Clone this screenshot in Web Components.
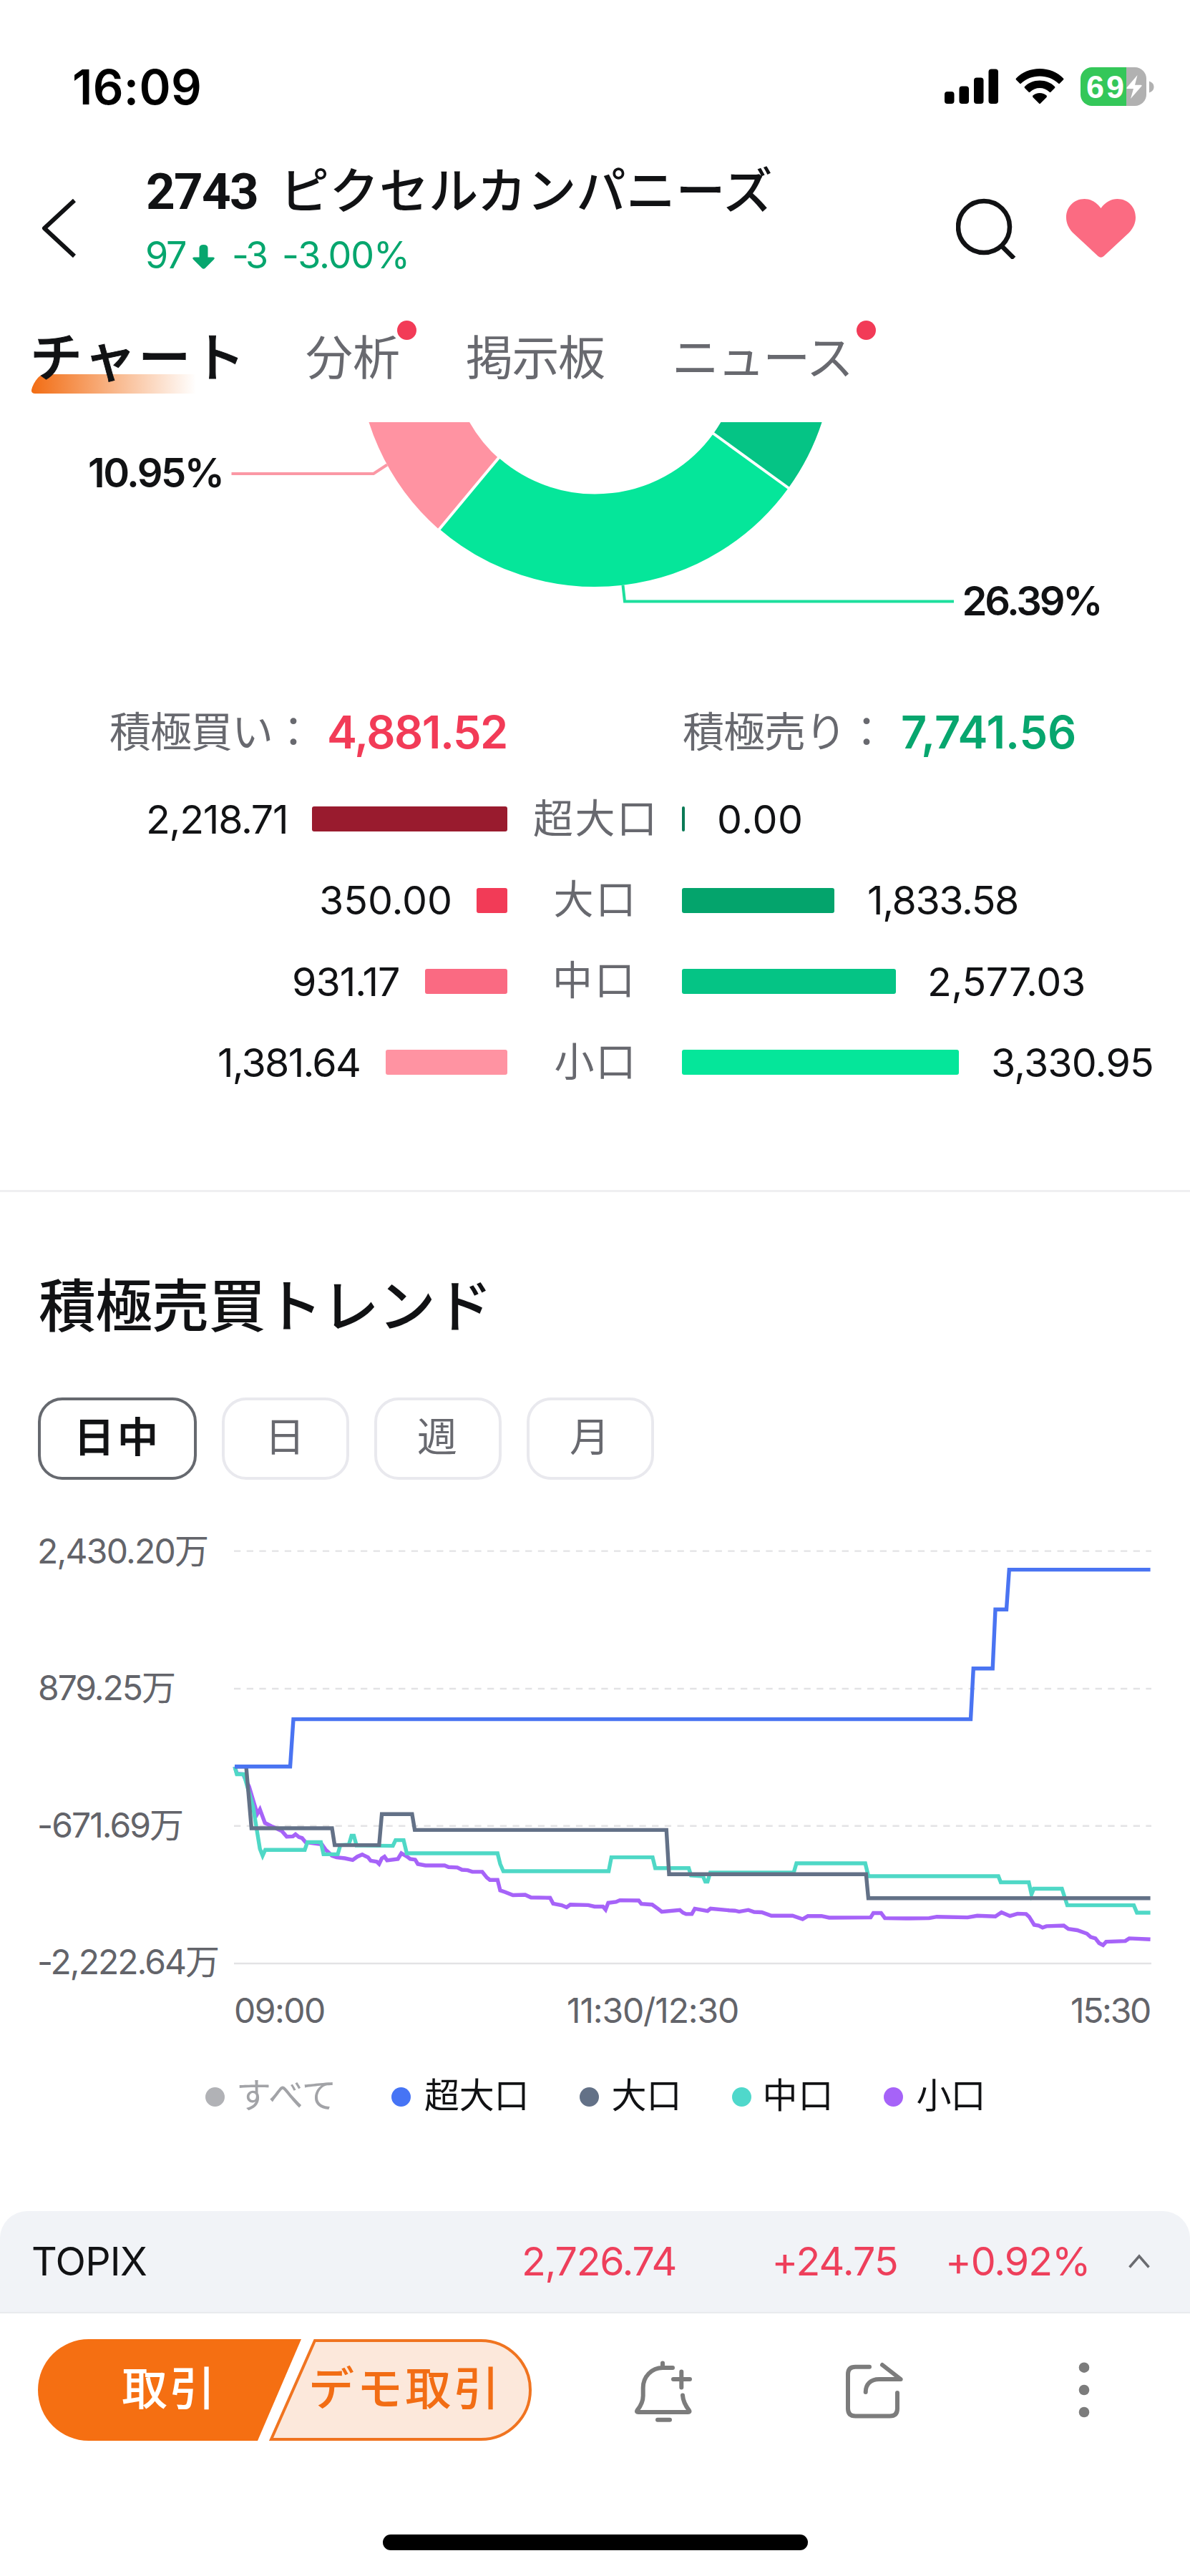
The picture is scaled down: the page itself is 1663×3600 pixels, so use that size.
<!DOCTYPE html>
<html lang="ja">
<head>
<meta charset="utf-8">
<title>2743 ピクセルカンパニーズ</title>
<style>
  body {
    margin: 0;
    background: #fff;
    color: #111214;
    font-family: Inter, "Noto Sans CJK JP", sans-serif;
    line-height: 1;
  }
</style>
</head>
<body>
<stock-page></stock-page>

<script>
function define(name, html, setup) {
  const template = document.createElement("template");
  template.innerHTML = html;
  customElements.define(name, class extends HTMLElement {
    constructor() {
      super();
      this.attachShadow({ mode: "open" })
        .appendChild(template.content.cloneNode(true));
    }
    connectedCallback() {
      if (setup) setup(this, this.shadowRoot);
    }
  });
}

// Text whose box is exactly its ink, tracked to the width in "w"
const pen = document.createElement("canvas").getContext("2d");

define("fit-text", `
  <style>
    :host { display: block; flex: none; white-space: nowrap; }
    span { display: inline-block; }
  </style>
  <span><slot></slot></span>
`, (host, root) => {
  const width = parseFloat(host.getAttribute("w"));
  const text = host.textContent.trim();
  const cs = getComputedStyle(host);
  pen.font = `${cs.fontWeight} ${cs.fontSize} ${cs.fontFamily}`;
  const m = pen.measureText(text);
  const ink = m.actualBoundingBoxLeft + m.actualBoundingBoxRight;
  const span = root.querySelector("span");
  span.style.letterSpacing = (width - ink) / ([...text].length - 1 || 1) + "px";
  span.style.marginLeft = m.actualBoundingBoxLeft + "px";
  host.style.width = width + "px";
});

define("status-bar", `
  <style>
    :host {
      display: flex;
      align-items: center;
      box-sizing: border-box;
      height: 190px;
      padding: 52px 50px 0 104px;
      color: #000;
    }
    .time { font-size: 67px; font-weight: 600; margin-right: auto; }
    .wifi { margin: 0 23px 0 24px; }
    .battery { position: relative; width: 103px; height: 54px; }
    .battery svg { display: block; }
    .level {
      position: absolute;
      left: 9px; top: 5px;
      color: #fff;
      font: 700 45px/1 "Liberation Sans", sans-serif;
    }
  </style>
  <fit-text class="time" w="175">16:09</fit-text>
  <svg width="75" height="50" viewBox="0 0 75 50">
    <rect x="0" y="32" width="13.5" height="17" rx="4"/>
    <rect x="20.5" y="24.500" width="13.5" height="24.500" rx="4"/>
    <rect x="41" y="12.500" width="13.5" height="36.500" rx="4"/>
    <rect x="61.500" y="0.500" width="13.5" height="48.500" rx="4"/>
  </svg>
  <svg class="wifi" width="68" height="50" viewBox="0 0 68 50">
    <path d="M34 0C47 0 59 5 67 13.500q1 1 0 2l-5 5q-1 1-2 0C53 14 44 10.500 34 10.500S15 14 8 20.500q-1 1-2 0l-5-5q-1-1 0-2C9 5 21 0 34 0Z"/>
    <path d="M34 16.500c8.500 0 15.500 3 21 8.500q1 1 0 2l-5.500 5.500q-1 1-2 0C44 29 39 27 34 27s-10 2-13.500 5.500q-1 1-2 0L13 27q-1-1 0-2c5.500-5.500 12.500-8.500 21-8.500Z"/>
    <path d="M34 34c4 0 7 1.500 9.500 3.500q1 1 0 2.500l-8.500 8.500q-1 1-2 0L24.500 40q-1-1.500 0-2.500C27 35.500 30 34 34 34Z"/>
  </svg>
  <div class="battery">
    <svg width="103" height="54" viewBox="0 0 103 54">
      <path d="M64 0h12a16 16 0 0 1 16 16v22a16 16 0 0 1-16 16H64Z" fill="#b1b1b1"/>
      <path d="M64 0H16A16 16 0 0 0 0 16v22a16 16 0 0 0 16 16h48Z" fill="#34c759"/>
      <path d="M96 19.500c4.500 1.500 6.500 4.500 6.500 8s-2 6.500-6.500 8Z" fill="#b1b1b1"/>
      <path d="M79.500 11 64.500 28.500q-.8 1.500 1 1.500h8.500L70 44l15.500-17.800q.8-1.500-1-1.500h-8.500Z" fill="#fff"/>
    </svg>
    <fit-text class="level" w="51">69</fit-text>
  </div>
`);

define("quote-header", `
  <style>
    :host {
      display: flex;
      align-items: center;
      box-sizing: border-box;
      height: 240px;
      padding: 18px 76px 0 58px;
    }
    .info { margin: 0 auto 14px 100px; }
    .row { display: flex; align-items: center; height: 88px; }
    .code { font: 700 71px/1 Roboto, sans-serif; margin-right: 44px; }
    .name { font-size: 69px; font-weight: 500; }
    .quote { color: #07a66e; font-size: 52px; padding-top: 1px; }
    .quote svg { margin: 5px 27px 0 10px; }
    .change { margin-right: 24px; }
    .heart { margin-left: 70px; }
  </style>
  <svg width="48" height="82" viewBox="0 0 48 82" fill="none" stroke="#111214" stroke-width="6" stroke-linejoin="round">
    <path d="M46 2 4 41l42 39"/>
  </svg>
  <div class="info">
    <div class="row">
      <fit-text class="code" w="153">2743</fit-text>
      <fit-text class="name" w="680">ピクセルカンパニーズ</fit-text>
    </div>
    <div class="row quote">
      <fit-text w="53">97</fit-text>
      <svg width="31" height="34" viewBox="0 0 31 34" fill="#07a66e">
        <path d="M15.500 0q6 0 6 5v12.500H29q3 .5 1 3L17.500 33q-2 1.500-4 0L1 20.500q-2-2.500 1-3h7.500V5q0-5 6-5Z"/>
      </svg>
      <fit-text class="change" w="46">-3</fit-text>
      <fit-text w="171">-3.00%</fit-text>
    </div>
  </div>
  <svg width="84" height="86" viewBox="0 0 84 86" fill="none" stroke="#111214" stroke-width="6.500">
    <circle cx="39" cy="41" r="36"/>
    <path d="m64 68 17 17"/>
  </svg>
  <svg class="heart" width="97" height="82" viewBox="0 0 97 82">
    <path d="M48.500 13C55 4 63 0 71.500 0 86 0 97 11 97 26c0 8-3.500 15-9 21L52.500 80q-4 3.500-8 0L9 47C3.500 41 0 34 0 26 0 11 11 0 25.500 0 34 0 42 4 48.500 13Z" fill="#fb6b82"/>
  </svg>
`);

define("tab-item", `
  <style>
    :host {
      display: block;
      position: relative;
      isolation: isolate;
      color: #68696f;
      font-size: 66px;
    }
    :host([active]) {
      color: #111214;
      font-size: 73px;
      font-weight: 500;
      -webkit-text-stroke: 1px #111214;
    }
    svg, i { display: none; position: absolute; }
    :host([active]) svg { display: block; left: -4px; top: 60px; z-index: -1; }
    :host([dot]) i {
      display: block;
      left: calc(100% + var(--dot-shift, 0px));
      top: -19px;
      width: 27px;
      height: 27px;
      border-radius: 50%;
      background: #f23b57;
    }
  </style>
  <svg width="230" height="27" viewBox="0 0 230 27">
    <defs>
      <linearGradient id="fade">
        <stop offset="0" stop-color="#f26d14"/>
        <stop offset="1" stop-color="#f26d14" stop-opacity="0"/>
      </linearGradient>
    </defs>
    <path d="M230 0H22Q13 0 9 5 2 13 0 22q-.5 5 5 5h225Z" fill="url(#fade)"/>
  </svg>
  <slot></slot>
  <i></i>
`);

define("tab-strip", `
  <style>
    :host {
      display: flex;
      align-items: center;
      box-sizing: border-box;
      height: 160px;
      padding: 0 0 21px 48px;
      gap: 95px;
    }
    tab-item:last-child { margin-left: 5px; }
  </style>
  <tab-item active><fit-text w="285">チャート</fit-text></tab-item>
  <tab-item dot style="--dot-shift:-2px"><fit-text w="129">分析</fit-text></tab-item>
  <tab-item><fit-text w="193">掲示板</fit-text></tab-item>
  <tab-item dot style="--dot-shift:7px"><fit-text w="245">ニュース</fit-text></tab-item>
`);

define("donut-chart", `
  <style>
    :host { display: block; height: 350px; }
    svg { display: block; overflow: hidden; }
    text { font-size: 56px; font-weight: 600; fill: #111214; }
  </style>
  <svg width="1663" height="350" viewBox="0 590 1663 350">
    <g fill="none" stroke-width="129.500">
      <path d="M564.500 486.500A267 269 0 0 0 656 691" stroke="#ff93a2"/>
      <path d="M656.200 690.200A268.800 268.800 0 0 0 1049.500 643.800" stroke="#05e69a"/>
      <path d="M1049.500 643.800A268.800 268.800 0 0 0 1100.300 486.500" stroke="#05c485"/>
    </g>
    <g stroke="#fff" stroke-width="4">
      <path d="M700 636 611 743"/>
      <path d="m993 603 113 82"/>
    </g>
    <path d="M323.500 662H522l19-12.500" fill="none" stroke="#fb98a5" stroke-width="4"/>
    <path d="m870.500 818 2.500 22.500h460" fill="none" stroke="#1ddf9d" stroke-width="4"/>
    <text x="123" y="680.500" textLength="191">10.95%</text>
    <text x="1344.500" y="859.500" textLength="197">26.39%</text>
  </svg>
`);

define("flow-row", `
  <style>
    :host {
      display: grid;
      grid-template-columns: 709px 244px 1fr;
      align-items: center;
      height: 113.400px;
      font-size: 55.500px;
    }
    div { display: flex; align-items: center; }
    .buy { justify-content: flex-end; gap: 37px; }
    .mid {
      justify-content: center;
      padding: 0 4px 2px 0;
      color: #68696f;
      font-size: 56px;
    }
    .sell { gap: 48px; }
    i { height: 35px; border-radius: 3px; }
  </style>
  <div class="buy"><slot name="buy"></slot><i></i></div>
  <div class="mid"><slot></slot></div>
  <div class="sell"><i></i><slot name="sell"></slot></div>
`, (host, root) => {
  const bars = root.querySelectorAll("i");
  ["buy", "sell"].forEach((side, n) => {
    const [width, color] = host.getAttribute(side).split(" ");
    bars[n].style.width = width + "px";
    bars[n].style.background = color;
  });
});

define("order-flow", `
  <style>
    :host { display: block; height: 722.500px; border-bottom: 3px solid #efeff1; }
    .totals {
      display: grid;
      grid-template-columns: 801px 1fr;
      align-items: center;
      box-sizing: border-box;
      height: 148px;
      padding: 18px 0 0 154px;
    }
    .total { display: flex; align-items: center; gap: 45px; }
    .label { color: #68696f; font-size: 58px; }
    .sum { font-size: 63px; font-weight: 600; }
  </style>
  <div class="totals">
    <div class="total">
      <fit-text class="label" w="261">積極買い：</fit-text>
      <fit-text class="sum" w="247" style="color:#f23b57">4,881.52</fit-text>
    </div>
    <div class="total">
      <fit-text class="label" w="261">積極売り：</fit-text>
      <fit-text class="sum" w="241" style="color:#07a66e">7,741.56</fit-text>
    </div>
  </div>
  <flow-row buy="273 #991b2e" sell="4 #0b7a56">
    <fit-text slot="buy" w="191">2,218.71</fit-text>
    <fit-text w="166">超大口</fit-text>
    <fit-text slot="sell" w="114">0.00</fit-text>
  </flow-row>
  <flow-row buy="43 #f23b57" sell="213 #04a46c">
    <fit-text slot="buy" w="180">350.00</fit-text>
    <fit-text w="107">大口</fit-text>
    <fit-text slot="sell" w="208">1,833.58</fit-text>
  </flow-row>
  <flow-row buy="115 #fa6a82" sell="299 #05c485">
    <fit-text slot="buy" w="146">931.17</fit-text>
    <fit-text w="104">中口</fit-text>
    <fit-text slot="sell" w="214">2,577.03</fit-text>
  </flow-row>
  <flow-row buy="170 #ff93a2" sell="387 #05e69a">
    <fit-text slot="buy" w="196">1,381.64</fit-text>
    <fit-text w="107">小口</fit-text>
    <fit-text slot="sell" w="222">3,330.95</fit-text>
  </flow-row>
`);

define("period-chip", `
  <style>
    :host {
      display: flex;
      align-items: center;
      justify-content: center;
      box-sizing: border-box;
      width: 178px;
      height: 115px;
      padding: 0 2px 5px 0;
      border: 4px solid #e9e9ee;
      border-radius: 34px;
      color: #68696f;
      font-size: 56px;
    }
    :host([active]) {
      width: 222px;
      padding-right: 0;
      border-color: #66696f;
      color: #111214;
      font-size: 57px;
      font-weight: 500;
      -webkit-text-stroke: 1px #111214;
    }
  </style>
  <slot></slot>
`);

define("trend-chart", `
  <style>
    :host { display: block; color: #63646a; font-size: 48px; }
    .plot { display: flex; height: 624px; padding-left: 55px; }
    .scale {
      display: flex;
      flex-direction: column;
      justify-content: space-between;
      width: 272px;
      height: 622px;
    }
    svg { margin-top: 11.400px; overflow: visible; }
    .axis { display: flex; padding: 18px 0 0 329px; }
  </style>
  <div class="plot">
    <div class="scale">
      <fit-text w="235">2,430.20万</fit-text>
      <fit-text w="189">879.25万</fit-text>
      <fit-text w="200">-671.69万</fit-text>
      <fit-text w="250">-2,222.64万</fit-text>
    </div>
    <svg width="1282" height="600" viewBox="0 0 1282 600" fill="none">
      <g stroke="#e3e3e5" stroke-width="2.400">
        <path d="M0 12.600h1282M0 205h1282M0 396.700h1282" stroke-dasharray="9.300 8.400"/>
        <path d="M0 589h1282"/>
      </g>
      <g class="lines" stroke-width="5.400"></g>
    </svg>
  </div>
  <div class="axis">
    <fit-text w="124">09:00</fit-text>
    <fit-text w="237" style="margin-left:341px">11:30/12:30</fit-text>
    <fit-text w="109" style="margin-left:467px">15:30</fit-text>
  </div>
`, (host, root) => {
  // last one is drawn on top
  const series = {
    "#a663f8": "1,314 4,323.6 12.6,324.5 21,341.5 32.5,380 36.2,373.6 43.2,392.5 52.3,397.2 58.7,400 66.7,403.8 73.7,411.8 82.3,411.4 86,408.5 90.8,412.3 95.1,413.7 100,419.4 123,422.7 128.3,430.2 136.9,438.3 143.3,440.6 155.1,442 165.8,444.4 172.3,439.7 179.2,436.8 187.3,440.6 191,445.3 199.6,446.8 202.8,450 206.6,442 210.3,439.7 214,444.9 229,443 233.9,435 241.9,439.7 246.2,443 253.2,443.9 256.9,450 267.6,452 294.4,452 299.8,454.3 312.1,454.8 318.5,458 326.6,458.6 333,460.9 346.9,460.9 353.3,468.9 357.6,472.2 368.3,472.2 372,486.9 379,489.2 389.8,493.5 406.9,493 415,496.8 441.7,497.2 446,505.3 457.8,507.6 464.8,510.5 470,506.7 495,507.4 503.8,509.5 515.6,509.5 519.3,513.8 523,504.3 533.9,502.9 539.2,500.6 565.6,501 569.3,505.7 584.4,506.7 593,512.8 597.8,516.6 623,514.2 627.4,518 631.7,519.9 639.8,519.9 644,512.4 661.8,515.7 666,512.4 692,514.7 700,515.2 705.9,516.6 718.8,514.2 726.9,517 737.6,517.5 751,522.3 780.6,522.3 794.6,527 802,522.7 821,522.7 831.7,525 889.7,524.6 893.5,518.5 904.3,518.5 909.6,525.6 939.2,526 971.5,525.6 982.2,523.7 1025.2,524.6 1038.7,522.3 1064,523.2 1072.5,517.5 1084.4,522.7 1095,519.4 1107,519.9 1111.2,523.7 1118.2,535 1124.7,536 1130,538.8 1135.4,536.9 1159.6,536 1166,540.7 1178.4,542.5 1191.9,547.3 1197.3,552 1203.7,553.9 1209,560.5 1214.5,563.3 1218.8,558.6 1245.6,557.6 1251,553.9 1280.6,555.3",
    "#4fd8c6": "1,314 4,324.5 13.7,324.5 26.6,369.8 36.2,428.8 40,438.3 43.7,430.2 98.9,430.2 102.6,419.4 121.4,419.4 125.1,436.4 145,436.4 148.7,423.6 160.5,423 164.2,410.4 167.5,410.4 171.2,424 222,424.6 225.8,416.6 237,416.6 241.4,435 368.3,435 372,450 376.4,460 523.6,460 527.4,440.6 585,440.6 588.7,455.7 635.5,455.7 638.7,466 655.4,467 658.6,474.6 661.8,474.6 665.6,461.9 782.2,461.9 786,449 882.2,449 886.5,467 1068.2,467 1071.5,475.5 1110.7,475.5 1114.5,492.5 1117.7,484.5 1157,484.5 1164.5,507.6 1257.5,507.6 1261.8,518 1280.6,518",
    "#637187": "1,313.7 17,313.7 24.4,400 137,400 140.7,423.6 202.8,423.6 206.6,380.2 248.9,380.2 252.6,402.4 604.3,402.4 608,464.2 883.3,464.2 886.5,497.7 1280.6,497.7",
    "#4a74f2": "1,313.7 78.5,313.7 83,247.6 1029.5,247.6 1033.3,176.8 1060.2,176.8 1064,94.2 1079.5,94.2 1083.3,38.6 1280.6,38.6"
  };
  root.querySelector(".lines").innerHTML = Object.entries(series)
    .map(([color, points]) => `<polyline points="${points}" stroke="${color}"/>`)
    .join("");
});

define("legend-item", `
  <style>
    :host { display: flex; align-items: center; gap: 20px; }
    i {
      width: 27px;
      height: 27px;
      margin-top: 4px;
      border-radius: 50%;
      background: var(--dot);
    }
  </style>
  <i></i><slot></slot>
`);

define("trend-section", `
  <style>
    :host { display: block; }
    h2 {
      display: flex;
      align-items: center;
      height: 160px;
      margin: 79px 0 48.500px 55px;
      font-size: 80px;
      font-weight: 500;
    }
    .chips { display: flex; gap: 35px; padding-left: 53px; }
    trend-chart { margin-top: 76px; }
    .legend {
      display: flex;
      gap: 76px;
      margin-top: 70px;
      padding-left: 287px;
      font-size: 49px;
    }
  </style>
  <h2><fit-text w="624">積極売買トレンド</fit-text></h2>
  <div class="chips">
    <period-chip active><fit-text w="104">日中</fit-text></period-chip>
    <period-chip>日</period-chip>
    <period-chip>週</period-chip>
    <period-chip>月</period-chip>
  </div>
  <trend-chart></trend-chart>
  <div class="legend">
    <legend-item style="--dot:#b1b2b6;color:#a2a3a7"><fit-text w="137">すべて</fit-text></legend-item>
    <legend-item style="--dot:#4674f5"><fit-text w="139.500">超大口</fit-text></legend-item>
    <legend-item style="--dot:#637187"><fit-text w="90">大口</fit-text></legend-item>
    <legend-item style="--dot:#4fd8cb"><fit-text w="89">中口</fit-text></legend-item>
    <legend-item style="--dot:#a663f8"><fit-text w="90">小口</fit-text></legend-item>
  </div>
`);

define("index-ticker", `
  <style>
    :host {
      display: flex;
      align-items: center;
      box-sizing: border-box;
      height: 143px;
      padding: 0 56px 1px 46px;
      border-bottom: 2px solid #e9ebee;
      border-radius: 38px 38px 0 0;
      background: #f1f3f7;
      color: #ee3f5b;
      font-size: 55.500px;
    }
    .name { margin-right: auto; color: #111214; }
  </style>
  <fit-text class="name" w="159">TOPIX</fit-text>
  <fit-text w="210.500">2,726.74</fit-text>
  <fit-text w="169.500" style="margin-left:140px">+24.75</fit-text>
  <fit-text w="193" style="margin:0 58px 0 73px">+0.92%</fit-text>
  <svg width="30" height="20" viewBox="0 0 30 20" fill="none" stroke="#6a6b70" stroke-width="3.500">
    <path d="M1.500 18.500 15 3l13.500 15.500"/>
  </svg>
`);

define("trade-switch", `
  <style>
    :host {
      display: flex;
      align-items: center;
      position: relative;
      box-sizing: border-box;
      width: 690px;
      height: 142px;
      padding: 0 0 5px 118px;
      font-size: 64px;
      font-weight: 500;
    }
    svg { position: absolute; left: 0; top: 0; }
    fit-text { position: relative; color: #fff; }
    .demo { margin-left: 144px; color: #f26d14; }
  </style>
  <svg width="690" height="142" viewBox="0 0 690 142">
    <path d="M71 0h297l-61 142H71A71 71 0 0 1 71 0Z" fill="#f56f12"/>
    <path d="M387 2h232a69 69 0 0 1 0 138H326Z" fill="#fce8db" stroke="#f07420" stroke-width="4"/>
  </svg>
  <fit-text w="121">取引</fit-text>
  <fit-text class="demo" w="253">デモ取引</fit-text>
`);

define("bottom-bar", `
  <style>
    :host { display: flex; flex-direction: column; align-items: center; height: 367px; }
    .tools {
      display: flex;
      align-items: center;
      align-self: stretch;
      padding: 36px 138px 131px 53px;
    }
    .tools svg { fill: none; stroke: #7c7c7c; stroke-width: 6; stroke-linecap: round; stroke-linejoin: round; }
    .home { width: 594px; height: 22px; border-radius: 11px; background: #000; }
  </style>
  <div class="tools">
    <trade-switch></trade-switch>
    <svg width="84" height="90" viewBox="0 0 84 90" style="margin-left:142px">
      <path d="M41 7.500V14M55 14H41C26 14 13.700 26 13.700 42v11C13.700 62 10 68 5.500 73.500q-1.500 2.500 1.500 2.500h69.500q3 0 1.500-2.500C73 67 69.500 61 69 52.500M34 86.700h17M67.300 19.500V41.500M56 30h23"/>
    </svg>
    <svg width="84" height="90" viewBox="0 0 84 90" style="margin-left:211px">
      <path d="M35 12.700H15.500Q5 12.700 5 23v48q0 10.500 10.500 10.500h48q10.500 0 10.500-10.500V49M29.700 48c0-11 7-18 19-18h30L53 10"/>
    </svg>
    <svg width="20" height="90" viewBox="0 0 20 90" style="margin-left:241px;fill:#7c7c7c;stroke:none">
      <circle cx="10" cy="13.700" r="7.300"/>
      <circle cx="10" cy="45" r="7.300"/>
      <circle cx="10" cy="76" r="7.300"/>
    </svg>
  </div>
  <div class="home"></div>
`);

define("stock-page", `
  <style>
    :host {
      display: flex;
      flex-direction: column;
      width: 1663px;
      height: 3600px;
      overflow: hidden;
    }
    trend-section { flex: 1; }
  </style>
  <status-bar></status-bar>
  <quote-header></quote-header>
  <tab-strip></tab-strip>
  <donut-chart></donut-chart>
  <order-flow></order-flow>
  <trend-section></trend-section>
  <index-ticker></index-ticker>
  <bottom-bar></bottom-bar>
`);
</script>
</body>
</html>
